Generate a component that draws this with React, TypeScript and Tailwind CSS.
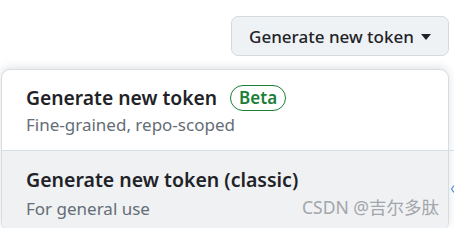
export default function App() {
  const font = { fontFamily: '"Noto Sans", "Noto Sans CJK SC", sans-serif' };
  return (
    <div
      className="relative w-[454px] h-[228px] overflow-hidden bg-white text-[#1f2328]"
      style={font}
    >
      <div className="flex justify-end pt-[16px] pr-[5px]">
        <button className="flex items-center gap-[7px] h-[40px] w-[218px] justify-center rounded-[7px] border border-[#d5d9de] bg-[#eff2f5] text-[17px] font-medium leading-none">
          <span>Generate new token</span>
          <svg width="10" height="6" viewBox="0 0 10 6" className="mt-[1px]">
            <path d="M0 0h10L5 6z" fill="#1f2328" />
          </svg>
        </button>
      </div>

      <div className="mt-[13px] ml-[1px] w-[448px] rounded-[9px] border border-[#d8dde2] bg-white shadow-[0_-2px_8px_rgba(140,149,159,0.25)] overflow-hidden">
        <div className="h-[80px] px-[24px] pt-[14px]">
          <div className="flex items-center gap-[13px]">
            <span className="text-[19.3px] font-semibold leading-[28px]">Generate new token</span>
            <span className="rounded-full border border-[#1a7f37] px-[8px] text-[17px] font-semibold leading-[24px] text-[#1a7f37]">
              Beta
            </span>
          </div>
          <div className="mt-[2px] text-[17px] leading-[22px] text-[#656d76]">
            Fine-grained, repo-scoped
          </div>
        </div>
        <div className="h-[80px] border-t border-[#d8dde2] bg-[#eff1f3] px-[24px] pt-[15px]">
          <div className="text-[19.5px] font-semibold leading-[28px]">Generate new token (classic)</div>
          <div className="mt-[4px] text-[17px] leading-[22px] text-[#656d76]">For general use</div>
        </div>
      </div>

      <div className="absolute left-[449px] top-[150px] h-px w-[5px] bg-[#d8dde2]" />
      <svg className="absolute left-[451px] top-[185px]" width="3" height="8" viewBox="0 0 3 8">
        <path d="M3 0.5L0.5 4L3 7.5" stroke="#4b8ad6" strokeWidth="1.2" fill="none" />
      </svg>

      <div className="absolute left-[302px] top-[196px] text-[17.5px] leading-[22px] text-[#a3a6aa]">
        CSDN @吉尔多肽
      </div>
    </div>
  );
}
